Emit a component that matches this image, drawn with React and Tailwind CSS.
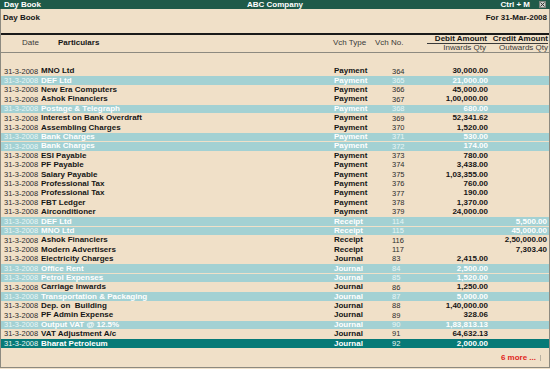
import React from "react";

// h = highlighted (light teal), s = selected (dark teal)
const rows = [
  ["MNO Ltd", "Payment", "364", "30,000.00", "", ""],
  ["DEF Ltd", "Payment", "365", "21,000.00", "", "h"],
  ["New Era Computers", "Payment", "366", "45,000.00", "", ""],
  ["Ashok Financiers", "Payment", "367", "1,00,000.00", "", ""],
  ["Postage & Telegraph", "Payment", "368", "680.00", "", "h"],
  ["Interest on Bank Overdraft", "Payment", "369", "52,341.62", "", ""],
  ["Assembling Charges", "Payment", "370", "1,520.00", "", ""],
  ["Bank Charges", "Payment", "371", "530.00", "", "h"],
  ["Bank Charges", "Payment", "372", "174.00", "", "h"],
  ["ESI Payable", "Payment", "373", "780.00", "", ""],
  ["PF Payable", "Payment", "374", "3,438.00", "", ""],
  ["Salary Payable", "Payment", "375", "1,03,355.00", "", ""],
  ["Professional Tax", "Payment", "376", "760.00", "", ""],
  ["Professional Tax", "Payment", "377", "190.00", "", ""],
  ["FBT Ledger", "Payment", "378", "1,370.00", "", ""],
  ["Airconditioner", "Payment", "379", "24,000.00", "", ""],
  ["DEF Ltd", "Receipt", "114", "", "5,500.00", "h"],
  ["MNO Ltd", "Receipt", "115", "", "45,000.00", "h"],
  ["Ashok Financiers", "Receipt", "116", "", "2,50,000.00", ""],
  ["Modern Advertisers", "Receipt", "117", "", "7,303.40", ""],
  ["Electricity Charges", "Journal", "83", "2,415.00", "", ""],
  ["Office Rent", "Journal", "84", "2,500.00", "", "h"],
  ["Petrol Expenses", "Journal", "85", "1,520.00", "", "h"],
  ["Carriage Inwards", "Journal", "86", "1,250.00", "", ""],
  ["Transportation & Packaging", "Journal", "87", "5,000.00", "", "h"],
  ["Dep. on  Building", "Journal", "88", "1,40,000.00", "", ""],
  ["PF Admin Expense", "Journal", "89", "328.06", "", ""],
  ["Output VAT @ 12.5%", "Journal", "90", "1,83,813.13", "", "h"],
  ["VAT Adjustment A/c", "Journal", "91", "64,632.13", "", ""],
  ["Bharat Petroleum", "Journal", "92", "2,000.00", "", "s"],
];

function Row({ r }) {
  const [part, type, no, dr, cr, kind] = r;
  const bg =
    kind === "h" ? "bg-[#a3d1d3]" : kind === "s" ? "bg-[#067a77]" : "";
  const light = kind !== "";
  const main = light ? "text-white" : "text-[#161616]";
  const sub = light ? "text-[#e8f6f6]" : "text-[#2c2c2c]";
  return (
    <div className="h-[9.4px]">
      <div className={`h-[8.6px] flex items-center whitespace-pre ${bg}`}>
        <div className={`w-[40px] pl-[3px] text-[7.5px] ${sub}`}>31-3-2008</div>
        <div className={`w-[293px] font-bold text-[8px] ${main}`}>{part}</div>
        <div className={`w-[58px] font-bold text-[8px] ${main}`}>{type}</div>
        <div className={`w-[40px] text-[7.5px] ${sub}`}>{no}</div>
        <div className={`w-[56px] text-right font-bold text-[8px] ${main}`}>{dr}</div>
        <div className={`w-[59px] text-right font-bold text-[8px] ${main}`}>{cr}</div>
      </div>
    </div>
  );
}

export default function App() {
  return (
    <div
      className="w-[550px] h-[369px] overflow-hidden bg-[#f0e0c8] text-[#161616] leading-none flex flex-col"
      style={{ fontFamily: '"Liberation Sans", Arial, sans-serif' }}
    >
      {/* title bar */}
      <div className="h-[9px] bg-[#1f5a49] text-white font-bold text-[8px] flex items-center relative px-[4px]">
        <span>Day Book</span>
        <span className="absolute left-0 right-0 text-center">ABC Company</span>
        <span className="ml-auto mr-[9px]">Ctrl + M</span>
        <span className="w-[7px] h-[7px] bg-[#c9cfc9] border border-[#7d867f] flex items-center justify-center">
          <svg width="5" height="5" viewBox="0 0 5 5">
            <path d="M0.5 0.5 L4.5 4.5 M4.5 0.5 L0.5 4.5" stroke="#333" strokeWidth="1" />
          </svg>
        </span>
      </div>

      <div className="flex-1 flex flex-col border-x border-b border-[#8d8a80]">
        {/* subtitle */}
        <div className="h-[24px] flex items-start pt-[5px] px-[2px] font-bold text-[8px]">
          <span>Day Book</span>
          <span className="ml-auto">For 31-Mar-2008</span>
        </div>
        <div className="h-[2px] bg-[#1a1a1a]" />

        {/* column header */}
        <div className="h-[18px] flex text-[8px] border-b border-[#8d8a80]">
          <div className="w-[57px] pl-[21px] pt-[4px] text-[#3a3a3a]">Date</div>
          <div className="w-[275px] pt-[4px] font-bold">Particulars</div>
          <div className="w-[42px] pt-[4px] text-[#3a3a3a]">Vch Type</div>
          <div className="w-[52px] pt-[4px] text-[#3a3a3a]">Vch No.</div>
          <div className="flex-1 flex flex-col pr-[1px]">
            <div className="h-[10px] flex items-center border-b border-[#3a3a3a] font-bold">
              <span className="w-[60px] text-right">Debit Amount</span>
              <span className="flex-1 text-right">Credit Amount</span>
            </div>
            <div className="flex-1 flex items-center text-[#3a3a3a]">
              <span className="w-[59px] text-right">Inwards Qty</span>
              <span className="flex-1 text-right">Outwards Qty</span>
            </div>
          </div>
        </div>

        <div className="h-[14px]" />

        {/* voucher rows */}
        <div className="flex flex-col">
          {rows.map((r, i) => (
            <Row key={i} r={r} />
          ))}
        </div>

        <div className="flex-1 flex items-center justify-end pr-[8px] pt-[1px]">
          <span className="text-[#e1261c] font-bold text-[8px]">6 more ...</span>
          <span className="ml-[4px] w-[1px] h-[6px] bg-[#b8b0a0]" />
        </div>
      </div>
      <div className="h-[1px]" />
    </div>
  );
}
